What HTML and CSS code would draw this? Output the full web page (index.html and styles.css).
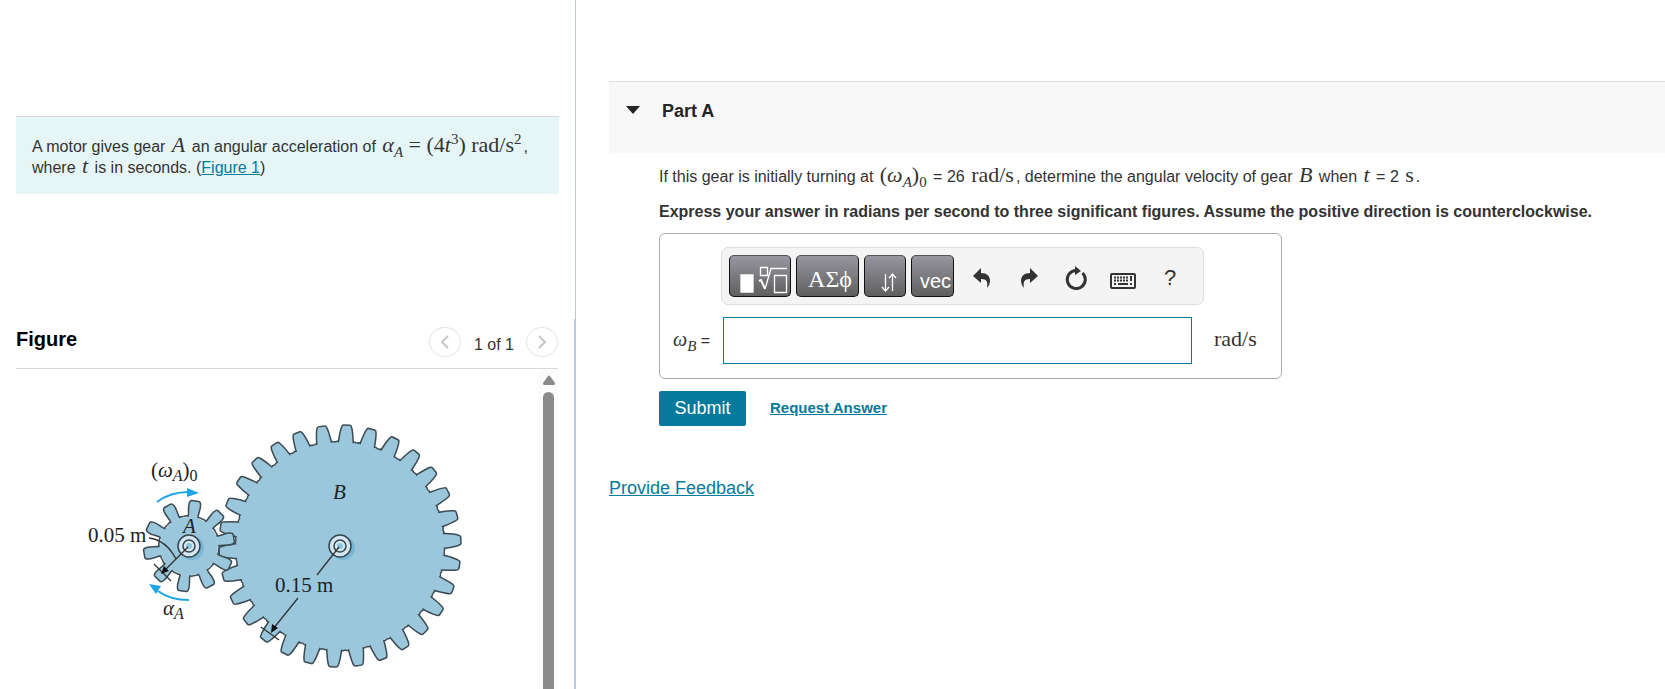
FILE: index.html
```
<!DOCTYPE html>
<html lang="en">
    <head>
        <meta charset="utf-8">
        <title>Gear Problem</title>
        <meta name="viewport" content="width=device-width, initial-scale=1.0">
        <link rel="stylesheet" href="styles.css">
    </head>
    <body>
        <aside class="sidebar">
            <div class="problem">
                A motor gives gear <i class="math">A</i> an angular acceleration of <span class="math nowrap"><i>α<sub>A</sub></i> = (4<i>t</i><sup>3</sup>) rad/s<sup>2</sup></span>, where <i class="math">t</i> is in seconds. (<a href="#figure">Figure 1</a>)
            </div>
            <section class="figure" id="figure">
                <header class="figure-header">
                    <h2>Figure</h2>
                    <button class="round" aria-label="Previous figure">
                        <svg width="10" height="14" viewBox="0 0 10 14"><path d="M8 1 2 7l6 6"/></svg>
                    </button>
                    <span class="count">1 of 1</span>
                    <button class="round" aria-label="Next figure">
                        <svg width="10" height="14" viewBox="0 0 10 14"><path d="m2 1 6 6-6 6"/></svg>
                    </button>
                </header>
                <div class="figure-body">
                    <svg class="gears" width="400" height="260" viewBox="80 420 400 260" role="img" aria-label="Gear A driving gear B">
                        <defs>
                            <path id="tooth-b" d="M-10.9-103.4Q-9-105-7.4-104.2C-7-108-6.6-114-5-119Q-4.500-121-3-121H3Q4.500-121 5-119C6.600-114 7-108 7.400-104.2Q9-105 10.900-103.4"/>
                            <g id="teeth-b">
                                <use href="#tooth-b"/>
                                <use href="#tooth-b" transform="rotate(12)"/>
                                <use href="#tooth-b" transform="rotate(24)"/>
                                <use href="#tooth-b" transform="rotate(36)"/>
                                <use href="#tooth-b" transform="rotate(48)"/>
                            </g>
                            <path id="tooth-a" d="M-9.300-28.500Q-7-30-5-29.500C-4.500-33-6.400-37-5.800-42Q-5.400-45.500-3.500-45.500H3.500Q5.400-45.500 5.800-42C6.400-37 4.500-33 5-29.500Q7-30 9.300-28.500"/>
                            <g id="hub">
                                <circle class="hub-shadow" cx="3" cy="2" r="12"/>
                                <circle class="hub-ring" r="11"/>
                                <circle class="hub-ring" r="6"/>
                                <circle class="hub-dot" r="3"/>
                            </g>
                        </defs>

                        <!-- gear B -->
                        <g class="gear" transform="translate(340 546) rotate(3.2)">
                            <circle class="disc" r="104"/>
                            <use href="#teeth-b"/>
                            <use href="#teeth-b" transform="rotate(60)"/>
                            <use href="#teeth-b" transform="rotate(120)"/>
                            <use href="#teeth-b" transform="rotate(180)"/>
                            <use href="#teeth-b" transform="rotate(240)"/>
                            <use href="#teeth-b" transform="rotate(300)"/>
                        </g>

                        <!-- gear A -->
                        <g class="gear" transform="translate(189 546) rotate(8)">
                            <circle class="disc" r="29"/>
                            <use href="#tooth-a"/>
                            <use href="#tooth-a" transform="rotate(36)"/>
                            <use href="#tooth-a" transform="rotate(72)"/>
                            <use href="#tooth-a" transform="rotate(108)"/>
                            <use href="#tooth-a" transform="rotate(144)"/>
                            <use href="#tooth-a" transform="rotate(180)"/>
                            <use href="#tooth-a" transform="rotate(216)"/>
                            <use href="#tooth-a" transform="rotate(252)"/>
                            <use href="#tooth-a" transform="rotate(288)"/>
                            <use href="#tooth-a" transform="rotate(324)"/>
                        </g>
                        <use href="#hub" x="340" y="546"/>
                        <use href="#hub" x="189" y="546"/>

                        <!-- dimension lines -->
                        <path class="dim" d="M339 547 317 575M298 598 273 629M261 627 279 640M188 547 163 572M154 564 171 581M149 538Q166 540 176 559"/>
                        <path class="tip" d="m271 633 1-9 6 4zM161 574l3-8 5 5z"/>

                        <!-- rotation arrows -->
                        <path class="spin" d="M157 502Q170 492 189 492M189 600Q170 600 158 591"/>
                        <path class="spin-tip" d="m199 493-12-5v9zM149 584l12 2-5 8z"/>

                        <g class="labels">
                            <text x="151" y="477">(<tspan class="it">ω</tspan><tspan class="it sm" dy="4">A</tspan><tspan dy="-4">)</tspan><tspan class="sm" dy="4">0</tspan></text>
                            <text x="88" y="542">0.05 m</text>
                            <text class="it" x="183" y="533">A</text>
                            <text class="it" x="333" y="499">B</text>
                            <text x="275" y="592">0.15 m</text>
                            <text class="it" x="163" y="615">α<tspan class="sm" dy="4">A</tspan></text>
                        </g>
                    </svg>
                    <div class="scrollbar">
                        <svg width="12" height="10" viewBox="0 0 12 10"><path d="M5 1Q6 0 7 1L12 8Q12 10 11 10H1Q0 10 0 8z"/></svg>
                        <div class="thumb"></div>
                    </div>
                </div>
            </section>
        </aside>

        <div class="divider"></div>

        <main>
            <header class="part">
                <svg width="14" height="8" viewBox="0 0 14 8"><path d="M0 0H14L7 8z"/></svg>
                <h2>Part A</h2>
            </header>
            <section class="question">
                <p>If this gear is initially turning at <span class="math nowrap">(<i>ω<sub>A</sub></i>)<sub>0</sub></span> = 26 <span class="math">rad/s</span>, determine the angular velocity of gear <i class="math">B</i> when <i class="math">t</i> = 2 <span class="math">s</span>.</p>
                <p class="instructions">Express your answer in radians per second to three significant figures. Assume the positive direction is counterclockwise.</p>

                <div class="answer" id="answer">
                    <div class="toolbar">
                        <button class="key template" aria-label="Templates">
                            <svg width="48" height="28" viewBox="0 0 48 28">
                                <path class="solid" d="M1 9H13V26H1z"/>
                                <path d="M20.500 1.500h7v8h-7zM34.500 9.500h12v17h-12zM25 23l6-20.500h16"/>
                                <path class="bold" d="m19 15 2-1 4 9"/>
                            </svg>
                        </button>
                        <button class="key greek">ΑΣϕ</button>
                        <button class="key arrows" aria-label="Subscript and superscript">
                            <svg width="16" height="20" viewBox="0 0 16 20"><path d="M4.500 1v17M1 14l3.500 4L8 14M11.500 18V1M8 5l3.500-4L15 5"/></svg>
                        </button>
                        <button class="key vec">vec</button>
                        <div class="tools">
                            <button class="tool" aria-label="Undo">
                                <svg width="18" height="20" viewBox="0 0 18 20"><path d="M0 8 8 0V5C14 5 17 8 17 13Q17 17 14 20C15 14 14 11 8 11V15z"/></svg>
                            </button>
                            <button class="tool" aria-label="Redo">
                                <svg width="18" height="20" viewBox="0 0 18 20"><path d="M18 8 10 0V5C4 5 1 8 1 13Q1 17 4 20C3 14 4 11 10 11V15z"/></svg>
                            </button>
                            <button class="tool" aria-label="Reset">
                                <svg width="22" height="24" viewBox="0 0 22 24"><path class="line" d="M17.500 7A9 9 0 1 1 11 4.500"/><path d="m10 0 6 5-6 4z"/></svg>
                            </button>
                            <button class="tool keyboard" aria-label="Keyboard shortcuts">
                                <svg width="26" height="16" viewBox="0 0 26 16"><path class="frame" d="M2 1H24Q25 1 25 2V14Q25 15 24 15H2Q1 15 1 14V2Q1 1 2 1z"/><path class="keys" d="M4 4.500H19M4 7.500H19"/><path d="M4 10h2v2H4zM8 10h10v2H8zM20 10h2v2h-2zM20 3h2v5h-2z"/></svg>
                            </button>
                            <button class="tool help" aria-label="Help">?</button>
                        </div>
                    </div>
                    <label for="omega"><i class="math">ω<sub>B</sub></i> =</label>
                    <input id="omega" type="text">
                    <span class="math unit">rad/s</span>
                </div>

                <div class="actions">
                    <button class="submit">Submit</button>
                    <a href="#answer">Request Answer</a>
                </div>
            </section>
            <a class="feedback" href="#feedback">Provide Feedback</a>
        </main>
    </body>
</html>
```
FILE: styles.css
```
* {
    box-sizing: border-box;
}

body {
    display: flex;
    height: 100vh;
    margin: 0;
    overflow: hidden;
    background: white;
    color: #333;
    font: 16px/22px "Liberation Sans", Arial, sans-serif;
}

a {
    color: #047a9c;
}

button {
    padding: 0;
    border: 0;
    background: none;
    color: inherit;
    font-family: inherit;
    cursor: pointer;
}

h2, p {
    margin: 0;
}

h2 {
    font-size: 18px;
}

sub, sup {
    font-size: 15px;
    line-height: 0;
}

.math {
    margin: 0 2px;
    font-family: "Liberation Serif", "Times New Roman", serif;
    font-size: 22px;
    line-height: 0;
}

.nowrap {
    white-space: nowrap;
}

/* Left column */
.sidebar {
    display: flex;
    flex-direction: column;
    flex: 0 0 574px;
    padding: 116px 15px 0 16px;
}

.problem {
    height: 78px;
    padding: 19px 16px;
    border-top: 1px solid #d9d9d9;
    background: #e6f6f7;
    line-height: 21px;
}

.figure {
    display: flex;
    flex-direction: column;
    flex: 1;
    margin: 132px 1px 0 0;
}

.figure-header {
    display: flex;
    align-items: center;
    height: 43px;
    padding-bottom: 10px;
    border-bottom: 1px solid #d9d9d9;
}

.figure-header h2 {
    flex: 1;
    padding-bottom: 6px;
    color: black;
    font-size: 20px;
}

.count {
    padding: 5px 12px 0 13px;
}

.round {
    display: flex;
    align-items: center;
    justify-content: center;
    width: 32px;
    height: 30px;
    border: 1px solid #e4e4e4;
    border-radius: 50%;
}

.round path {
    fill: none;
    stroke: #c7c7c7;
    stroke-width: 2;
}

.figure-body {
    display: flex;
    flex: 1;
    justify-content: space-between;
}

.gears {
    margin: 51px 0 0 64px;
}

.scrollbar {
    display: flex;
    flex-direction: column;
    align-items: center;
    gap: 7px;
    width: 19px;
    padding-top: 6px;
    background: #fcfcfc;
}

.scrollbar path {
    fill: #8b8b8b;
}

.thumb {
    flex: 1;
    width: 11px;
    border-radius: 6px 6px 0 0;
    background: #8b8b8b;
}

/* Gear drawing */
.gear {
    fill: #9ac7dc;
    stroke: #3c4a52;
    stroke-width: 1.5;
}

.disc {
    stroke: none;
}

.hub-shadow {
    fill: #7ab5d3;
}

.hub-ring {
    fill: #d3e8f2;
    stroke: #37444d;
    stroke-width: 1.5;
}

.hub-dot {
    fill: #8fc3dc;
}

.dim {
    fill: none;
    stroke: #333;
    stroke-width: 1.3;
}

.tip {
    fill: #111;
}

.spin {
    fill: none;
    stroke: #1fa5e4;
    stroke-width: 2;
}

.spin-tip {
    fill: #1fa5e4;
}

.labels {
    fill: #222;
    font-family: "Liberation Serif", "Times New Roman", serif;
    font-size: 21px;
}

.it {
    font-style: italic;
}

.sm {
    font-size: 16px;
}

.divider {
    flex: 0 0 2px;
    background: linear-gradient(to right, white 1px, #b8cadb 1px) top / 2px 319px no-repeat #b8cadb;
}

/* Right column */
main {
    flex: 1;
    min-width: 0;
    padding: 81px 0 0 33px;
}

.part {
    display: flex;
    align-items: flex-start;
    gap: 22px;
    height: 72px;
    padding: 18px 17px;
    border-top: 1px solid #dcdcdc;
    background: #f8f8f8;
    color: #252525;
}

.part svg {
    margin-top: 6px;
    fill: #252525;
}

.question {
    padding: 13px 16px 0 50px;
}

.instructions {
    margin-top: 13px;
    font-weight: bold;
}

.answer {
    display: grid;
    grid-template-columns: 50px 469px auto;
    align-items: center;
    row-gap: 12px;
    width: 623px;
    margin-top: 10px;
    padding: 13px 13px 14px;
    border: 1px solid #aaa;
    border-radius: 6px;
}

.toolbar {
    display: flex;
    grid-column: 2 / 4;
    align-items: center;
    justify-self: start;
    gap: 5px;
    width: 483px;
    height: 58px;
    margin-left: -2px;
    padding: 0 7px;
    border: 1px solid #ddd;
    border-radius: 7px;
    background: #f4f4f4;
}

.key {
    display: flex;
    align-items: flex-end;
    justify-content: flex-end;
    height: 42px;
    border: 1px solid #111;
    border-top-color: #555;
    border-radius: 5px;
    background: linear-gradient(#9897a0, #5f5f5f);
    color: white;
}

.key path {
    fill: none;
    stroke: white;
    stroke-width: 1.3;
}

.key .solid {
    fill: white;
}

.key .bold {
    stroke-width: 2;
}

.template {
    width: 62px;
    padding: 0 2px 2px 0;
}

.greek {
    width: 63px;
    padding: 0 6px 3px 0;
    font: 24px "Liberation Serif", "Times New Roman", serif;
}

.arrows {
    width: 42px;
    padding: 0 8px 3px 0;
}

.vec {
    width: 43px;
    padding: 0 2px 4px 0;
    font-size: 20px;
    line-height: 22px;
}

.tools {
    display: flex;
    gap: 5px;
    padding: 4px 0 0 2px;
}

.tool {
    display: flex;
    align-items: center;
    justify-content: center;
    width: 42px;
    height: 42px;
    fill: #333;
}

.tool .line {
    fill: none;
    stroke: #333;
    stroke-width: 3;
}

.keyboard {
    padding-top: 6px;
}

.keyboard .frame {
    fill: none;
    stroke: #333;
    stroke-width: 2;
}

.keys {
    stroke: #333;
    stroke-width: 2;
    stroke-dasharray: 2 1;
}

.help {
    font-size: 22px;
}

label .math {
    margin: 0;
    font-size: 20px;
}

.answer input {
    width: 100%;
    height: 47px;
    padding: 0 10px;
    border: 1px solid #047a9c;
    outline: none;
    font-size: 18px;
}

.unit {
    padding: 0 0 4px 20px;
}

.actions {
    display: flex;
    align-items: center;
    gap: 24px;
    margin-top: 12px;
}

.actions a {
    padding-bottom: 2px;
    font-size: 15px;
    font-weight: bold;
}

.submit {
    width: 87px;
    height: 35px;
    border-radius: 2px;
    background: #047a9c;
    color: white;
    font-size: 18px;
}

.feedback {
    display: inline-block;
    margin-top: 51px;
    font-size: 18px;
}
```
